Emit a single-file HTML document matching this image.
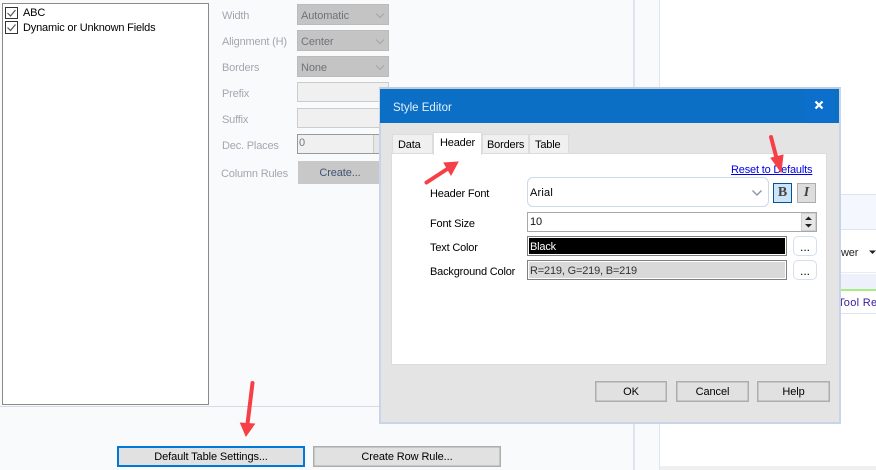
<!DOCTYPE html>
<html><head><meta charset="utf-8"><style>
html,body{margin:0;padding:0}
body{width:876px;height:470px;overflow:hidden;position:relative;background:#fff;font-family:"Liberation Sans",sans-serif;font-size:11px;color:#000}
.a{position:absolute;box-sizing:border-box}
.t{position:absolute;white-space:nowrap;line-height:14px;letter-spacing:-.18px;margin-top:1px}
.g{color:#a3a7ad}
.sel{position:absolute;box-sizing:border-box;left:297px;width:92px;height:21px;background:#c4c4c4;border:1px solid #bbb;color:#6f7378;line-height:22px;padding-left:3px;letter-spacing:-.1px}
.inp{position:absolute;box-sizing:border-box;left:297px;width:92px;height:20px;background:#f0f0f0;border:1px solid #ccc}
.btn{position:absolute;box-sizing:border-box;background:#e1e1e1;border:1px solid #adadad;box-shadow:inset 0 0 0 .5px #adadad;text-align:center;letter-spacing:-.1px}
.dots{position:absolute;box-sizing:border-box;left:793px;width:24px;height:20px;background:#fff;border:1px solid #d5dff0;border-radius:5px;text-align:center;line-height:20px;font-size:12px}
</style></head><body>
<div class="a" style="left:0;top:0;width:633px;height:470px;background:#f9fafc"></div>
<div class="a" style="left:633px;top:0;width:2px;height:470px;background:#dde4f2"></div>
<div class="a" style="left:635px;top:0;width:24px;height:470px;background:#f9fafc"></div>
<div class="a" style="left:659px;top:0;width:1px;height:470px;background:#dfe4ee"></div>
<div class="a" style="left:660px;top:466px;width:216px;height:4px;background:#f0f0f0"></div>
<div class="a" style="left:0;top:406px;width:380px;height:1px;background:#d5dae4"></div>

<div class="a" style="left:2px;top:3px;width:207px;height:402px;background:#fff;border:1px solid #8a8a8a"></div>
<svg class="a" style="left:5px;top:6px" width="14" height="30" viewBox="0 0 14 30"><rect x=".5" y="1.500" width="12" height="11" fill="#fff" stroke="#333"/><path d="M2.500 7l3 3 5-6" fill="none" stroke="#555" stroke-width="1.200"/><rect x=".5" y="15.500" width="12" height="12" fill="#fff" stroke="#333"/><path d="M2.500 21.500l3 3 5-6" fill="none" stroke="#555" stroke-width="1.200"/></svg>
<div class="t" style="left:23px;top:5px">ABC</div>
<div class="t" style="left:23px;top:20px">Dynamic or Unknown Fields</div>

<div class="t g" style="left:222px;top:8px">Width</div>
<div class="t g" style="left:222px;top:34px">Alignment (H)</div>
<div class="t g" style="left:222px;top:60px">Borders</div>
<div class="t g" style="left:222px;top:86px">Prefix</div>
<div class="t g" style="left:222px;top:112px">Suffix</div>
<div class="t g" style="left:222px;top:138px">Dec. Places</div>
<div class="t g" style="left:221px;top:166px">Column Rules</div>
<div class="sel" style="top:4px">Automatic</div>
<div class="sel" style="top:30px">Center</div>
<div class="sel" style="top:56px">None</div>
<svg class="a" style="left:375px;top:12px" width="12" height="58" viewBox="0 0 12 58"><path d="M1 1.500l4 4 4-4M1 27.500l4 4 4-4M1 53.500l4 4 4-4" fill="none" stroke="#a5a5a5"/></svg>
<div class="inp" style="top:82px"></div>
<div class="inp" style="top:108px"></div>
<div class="inp" style="top:134px;border-color:#999;color:#777;line-height:17px;padding-left:1px">0</div>
<div class="a" style="left:373px;top:135px;width:6px;height:18px;background:#e6e6e6;border-left:1px solid #ccc"></div>
<div class="btn" style="left:298px;top:161px;width:90px;height:23px;background:#c8c8c8;border-color:#c8c8c8;box-shadow:none;line-height:23px;color:#3f5474;padding-right:6px">Create...</div>

<div class="a" style="left:840px;top:194px;width:36px;height:36px;background:#f4f7fd;border-top:1px solid #dde4f2;border-bottom:1px solid #dde4f2"></div>
<div class="t" style="left:841px;top:245px;color:#222">wer</div>
<svg class="a" style="left:868px;top:250px" width="8" height="5"><path d="M1 .5h7l-3.500 3.500z" fill="#222"/></svg>
<div class="a" style="left:840px;top:272px;width:36px;height:1px;background:#e6eaf2"></div>
<div class="a" style="left:840px;top:274px;width:36px;height:15px;background:#eef1fb"></div>
<div class="a" style="left:840px;top:289px;width:36px;height:2px;background:#a6ee82"></div>
<div class="t" style="left:838px;top:295px;color:#3a1a9c;letter-spacing:.3px">Tool Re</div>
<div class="a" style="left:840px;top:313px;width:36px;height:1px;background:#dde4f2"></div>

<div class="a" style="left:379px;top:87px;width:462px;height:337px;background:#e4e4e4;border:2px solid #c8d5e8;border-top-color:#c2cbdc"></div>
<div class="a" style="left:380px;top:89px;width:459px;height:34px;background:#0b6fc5"></div>
<div class="a" style="left:805px;top:90px;width:28px;height:32px;background:#0d6fcc"></div>
<div class="t" style="left:393px;top:100px;color:#e6f0fa;font-size:11.500px;letter-spacing:0">Style Editor</div>
<svg class="a" style="left:814px;top:100px" width="11" height="11"><path d="M1.500 1.500l7 7M8.500 1.500l-7 7" stroke="#fff" stroke-width="2.200" fill="none"/></svg>

<div class="a" style="left:392px;top:134px;width:41px;height:20px;background:#f0f0f0;border:1px solid #dcdcdc"></div>
<div class="a" style="left:482px;top:134px;width:47px;height:20px;background:#f0f0f0;border:1px solid #dcdcdc"></div>
<div class="a" style="left:529px;top:134px;width:40px;height:20px;background:#f0f0f0;border:1px solid #dcdcdc"></div>
<div class="a" style="left:391px;top:153px;width:436px;height:212px;background:#fff;border:1px solid #dcdcdc"></div>
<div class="a" style="left:433px;top:132px;width:49px;height:23px;background:#fff;border:1px solid #dcdcdc;border-bottom:0"></div>
<div class="t" style="left:398px;top:137px">Data</div>
<div class="t" style="left:440px;top:135px">Header</div>
<div class="t" style="left:487px;top:137px">Borders</div>
<div class="t" style="left:535px;top:137px">Table</div>

<div class="t" style="left:731px;top:162px;color:#0000e6;text-decoration:underline">Reset to Defaults</div>
<div class="t" style="left:430px;top:186px">Header Font</div>
<div class="a" style="left:527px;top:177px;width:242px;height:30px;background:#fff;border:1px solid #cbd8ea;border-radius:6px"></div>
<div class="t" style="left:530px;top:185px;letter-spacing:.2px">Arial</div>
<svg class="a" style="left:751px;top:189px" width="12" height="8"><path d="M1.500 1.500l4.500 4.500 4.500-4.500" fill="none" stroke="#8a96aa" stroke-width="1.400"/></svg>
<div class="a" style="left:773px;top:183px;width:19px;height:20px;background:#cce4f7;border:1px solid #005499;font:bold 14px/18px 'Liberation Serif',serif;color:#444;text-align:center">B</div>
<div class="a" style="left:797px;top:183px;width:19px;height:20px;background:#ddd;border:1px solid #adadad;font:italic bold 14px/18px 'Liberation Serif',serif;color:#444;text-align:center">I</div>

<div class="t" style="left:430px;top:216px">Font Size</div>
<div class="a" style="left:527px;top:212px;width:290px;height:20px;background:#fff;border:1px solid #a8a8a8"></div>
<div class="t" style="left:530px;top:214px;color:#111">10</div>
<div class="a" style="left:801px;top:213px;width:15px;height:18px;background:#e6e6e6;border:1px solid #cfcfcf"></div>
<svg class="a" style="left:804px;top:215px" width="9" height="14"><path d="M1 5h7L4.500 1.500zM1 9h7L4.500 12.500z" fill="#222"/></svg>

<div class="t" style="left:430px;top:240px">Text Color</div>
<div class="a" style="left:527px;top:236px;width:260px;height:20px;background:#000;border:1px solid #808080;box-shadow:inset 0 0 0 1px #fff"></div>
<div class="t" style="left:530px;top:239px;color:#fff">Black</div>
<div class="dots" style="top:236px">...</div>

<div class="t" style="left:430px;top:264px">Background Color</div>
<div class="a" style="left:527px;top:260px;width:260px;height:20px;background:#d9d9d9;border:1px solid #808080;box-shadow:inset 0 0 0 1px #fff"></div>
<div class="t" style="left:530px;top:263px;color:#333">R=219, G=219, B=219</div>
<div class="dots" style="top:260px">...</div>

<div class="btn" style="left:595px;top:381px;width:72px;height:21px;line-height:21px">OK</div>
<div class="btn" style="left:676px;top:381px;width:73px;height:21px;line-height:21px">Cancel</div>
<div class="btn" style="left:757px;top:381px;width:73px;height:21px;line-height:21px">Help</div>

<div class="btn" style="left:117px;top:446px;width:188px;height:21px;border:2px solid #0078d7;box-shadow:none;line-height:19px">Default Table Settings...</div>
<div class="btn" style="left:313px;top:446px;width:188px;height:21px;line-height:21px">Create Row Rule...</div>

<svg class="a" style="left:0;top:0" width="876" height="470" viewBox="0 0 876 470">
<g fill="#f64048" stroke="#f64048" stroke-linecap="round">
<path d="M426.500 182.500L448 168.500" stroke-width="4" fill="none"/><path d="M458 162L444 163L451 175Z" stroke-width="1"/>
<path d="M771 137L777 160" stroke-width="4" fill="none"/><path d="M781 172L771 158L783 155Z" stroke-width="1"/>
<path d="M252.500 383L247.500 424" stroke-width="4" fill="none"/><path d="M246 436L240.500 423L254.500 424Z" stroke-width="1"/>
</g></svg>
</body></html>
